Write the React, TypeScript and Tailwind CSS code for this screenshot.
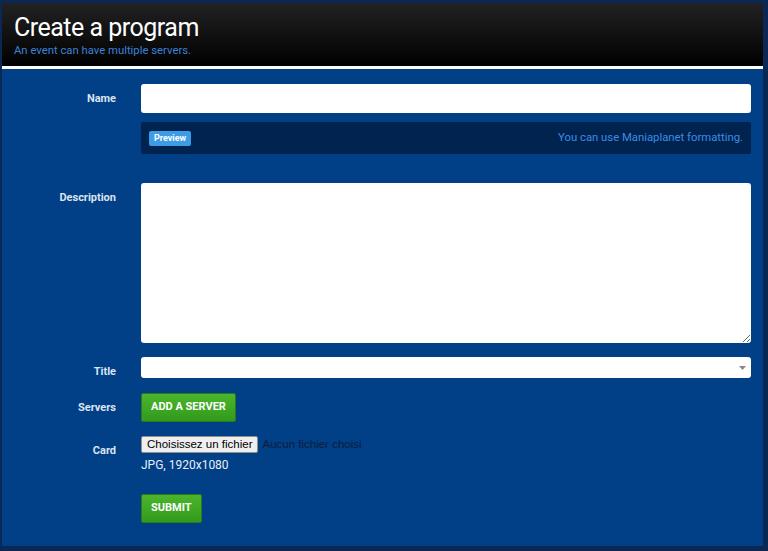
export default function App() {
  const label = "w-[114px] shrink-0 pt-[8px] text-right text-[11px] leading-[14px] font-bold text-[#dbe4f0]";
  const greenBtn =
    "h-[29px] rounded-[2px] border border-[#2a7d16] bg-[linear-gradient(to_bottom,#4cb52c,#329a1c)] px-[9px] text-[11px] font-bold uppercase text-white";

  return (
    <div className="h-[551px] w-[768px] overflow-hidden bg-[#0b2754] pb-[5px] pl-[2px] pr-[5px] pt-[3px] font-['Roboto',sans-serif]">
      <div className="flex h-full flex-col bg-[#013f86]">
        {/* Header */}
        <header className="h-[63px] bg-[linear-gradient(to_bottom,#222,#000)] px-[12px] pt-[9px]">
          <h1 className="text-[25px] leading-[32px] tracking-[-0.5px] text-white">Create a program</h1>
          <p className="text-[11.3px] leading-[14px] text-[#3b82d8]">An event can have multiple servers.</p>
        </header>
        <div className="h-[3px] bg-white" />

        {/* Form */}
        <main className="flex flex-col pr-[12px] pt-[15px]">
          <div className="flex gap-[25px]">
            <div className={label}>Name</div>
            <div className="flex-1">
              <input className="h-[29px] w-full rounded-[3px] bg-white px-2 text-sm outline-none" />
              <div className="mt-[9px] flex h-[32px] items-center justify-between rounded-[2px] bg-[#01234f] px-[8px]">
                <span className="rounded-[2px] bg-[#3c9ce6] px-[5px] text-[9px] leading-[15px] font-bold text-white">Preview</span>
                <span className="text-[11.3px] text-[#3d8ce2]">You can use Maniaplanet formatting.</span>
              </div>
            </div>
          </div>

          <div className="mt-[29px] flex gap-[25px]">
            <div className={label}>Description</div>
            <textarea className="h-[160px] flex-1 resize-y rounded-[3px] bg-white p-2 text-sm outline-none" />
          </div>

          <div className="mt-[14px] flex gap-[25px]">
            <div className={label}>Title</div>
            <div className="relative flex h-[21px] flex-1 items-center rounded-[3px] bg-white">
              <svg className="absolute right-[5px] top-[9px]" width="7" height="4" viewBox="0 0 7 4">
                <path d="M0 0h7L3.5 4z" fill="#888" />
              </svg>
            </div>
          </div>

          <div className="mt-[14px] flex gap-[25px]">
            <div className={label}>Servers</div>
            <button className={greenBtn}>Add a server</button>
          </div>

          <div className="mt-[14px] flex gap-[25px]">
            <div className={label}>Card</div>
            <div>
              <div className="flex h-[17px] items-center font-['Liberation_Sans',sans-serif] text-[11.5px]">
                <span className="h-[17px] rounded-[2px] border border-[#8f8f8f] bg-[#efefef] px-[5px] leading-[15px] text-black">
                  Choisissez un fichier
                </span>
                <span className="ml-[4px] text-[#0b1d3c]">Aucun fichier choisi</span>
              </div>
              <div className="mt-[4px] text-[12px] leading-[16px] text-[#e8eef7]">JPG, 1920x1080</div>
            </div>
          </div>

          <div className="mt-[21px] flex gap-[25px]">
            <div className="w-[114px] shrink-0" />
            <button className={greenBtn}>Submit</button>
          </div>
        </main>
      </div>
    </div>
  );
}
